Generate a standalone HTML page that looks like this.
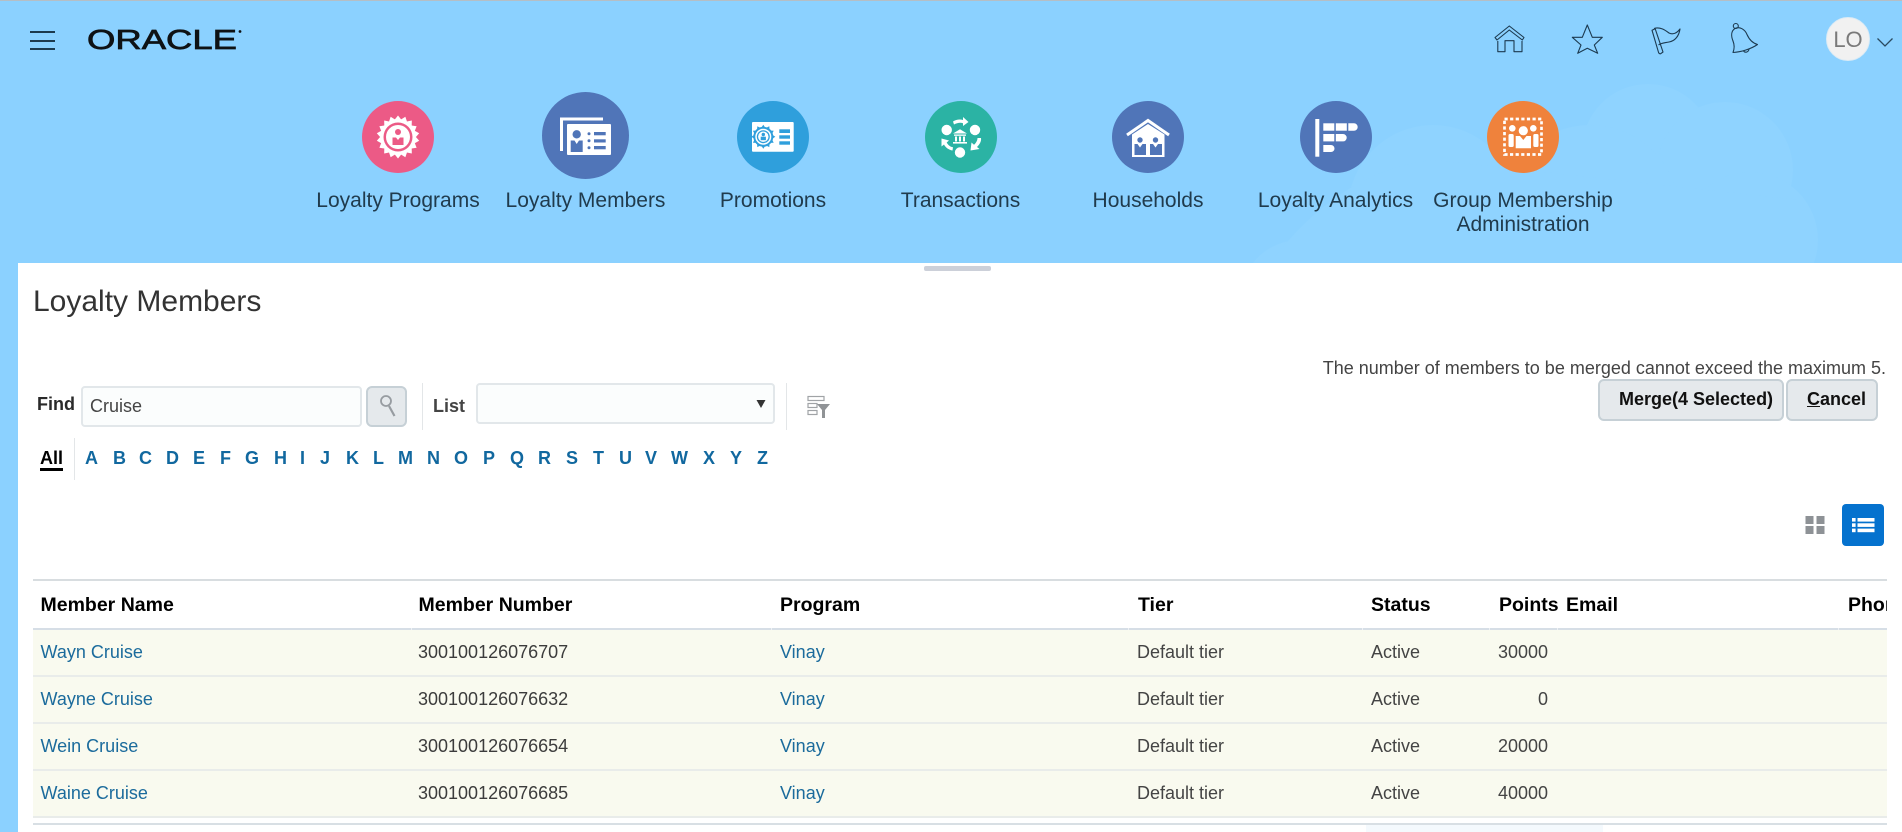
<!DOCTYPE html>
<html lang="en"><head><meta charset="utf-8"><title>Loyalty Members</title>
<style>
html,body{margin:0;padding:0;width:1902px;height:832px;overflow:hidden;background:#8bd1ff}
body{position:relative;font-family:"Liberation Sans",sans-serif;color:#333}
.a{position:absolute}
.t{position:absolute;white-space:nowrap;font-size:18px;line-height:24px}
.l{position:absolute;white-space:nowrap;font-size:21px;line-height:24px;color:#203b4d;text-align:center;width:188px}
.h{font-weight:bold;font-size:19.5px;color:#000}
.lk{color:#1b6b9c}
.z{font-weight:bold;color:#11689f;top:446px}
.r{position:absolute;left:33px;width:1854px;height:45px;background:#f9faef}
.ln{position:absolute;left:33px;width:1854px;height:2px;background:#e9ecea}
.v{position:absolute;width:1px;height:2px;top:628px;background:#eef1f4}
.btn{position:absolute;box-sizing:border-box;background:#e5e9ec;border:2px solid #c6d0d6;border-radius:6px}
</style></head><body>
<div class="a" style="left:0;top:0;width:1902px;height:1px;background:#b5bec5"></div>

<svg class="a" style="left:0;top:0" width="1902" height="263" viewBox="0 0 1902 263">
<g fill="#8fd3ff">
<circle cx="1433" cy="210" r="85"/><circle cx="1648" cy="150" r="66"/><circle cx="1725" cy="170" r="68"/><circle cx="1590" cy="215" r="90"/><circle cx="1750" cy="240" r="68"/><circle cx="1300" cy="300" r="60"/><path d="M1270 263 Q1340 170 1433 160 L1800 200 V263Z"/>
</g>
</svg>

<!-- hamburger + logo -->
<div class="a" style="left:30px;top:31px;width:25px;height:2px;background:#1c3a4e"></div>
<div class="a" style="left:30px;top:39.5px;width:25px;height:2px;background:#1c3a4e"></div>
<div class="a" style="left:30px;top:48px;width:25px;height:2px;background:#1c3a4e"></div>
<svg class="a" style="left:80px;top:20px" width="170" height="40" viewBox="80 20 170 40">
<text x="87" y="49" font-family="Liberation Sans" font-size="27.5" fill="#0e1215" stroke="#0e1215" stroke-width="0.7" textLength="150" lengthAdjust="spacingAndGlyphs">ORACLE</text>
<circle cx="240" cy="31.5" r="1.4" fill="#0e1215"/>
</svg>

<!-- all icons -->
<svg class="a" style="left:0;top:0" width="1902" height="263" viewBox="0 0 1902 263">
<defs><path id="tooth" d="M-3.2-17.5 0-21.5 3.2-17.5Z" fill="#fff"/><path id="gt" d="M-2-9 0-12 2-9Z" fill="#2f9fdc"/></defs>
<!-- header icons -->
<g fill="none" stroke="#1c3a50" stroke-width="1.1" stroke-linejoin="round">
<path d="M1495 37.5 1509.3 26 1524 37.5 1522.3 40 1509.3 30 1497 40Z"/>
<path d="M1497.8 41V51.7H1505V40.7H1514V51.7H1522V41"/>
<path d="M1587.3 25 1592.3 37.3H1602.3L1594.3 45 1597.7 53.3 1587.3 48.3 1577.7 53.3 1581 45 1572.3 37.3H1582.3Z"/>
<path d="M1652 30.2 1655.2 28.8 1663 52 1660.5 53.8C1659.5 54 1659 53.5 1658.6 52.6Z"/>
<path d="M1654 28.5C1660 26.5 1665 30 1669 33C1673 35 1677 33 1680 29C1679 36 1675 41 1669 42C1664 43 1661 43 1658.5 45"/>
<circle cx="1735.8" cy="26" r="2.5"/>
<path d="M1735 28.5C1731 31 1731 36 1733 41C1735 46 1734 50 1733 52.5C1741 52 1751 49 1757.5 44.5C1752 43 1749 39 1747 34.5C1745 29.5 1739.5 26 1735 28.5Z"/>
<path d="M1743.5 51C1745 53 1748 52.5 1749 49.5"/>
</g>
<circle cx="1848" cy="39" r="21.5" fill="#f1f1f1" stroke="#dcebf5" stroke-width="1"/>
<path d="M1877.5 38.5 1885 46 1892.5 38.5" fill="none" stroke="#2a4a60" stroke-width="1.3"/>

<!-- Loyalty Programs -->
<circle cx="398" cy="137" r="36" fill="#ec5a86"/>
<circle cx="398" cy="137" r="18" fill="#fff"/>
<g transform="translate(398 137)"><use href="#tooth"/><use href="#tooth" transform="rotate(20)"/><use href="#tooth" transform="rotate(40)"/><use href="#tooth" transform="rotate(60)"/><use href="#tooth" transform="rotate(80)"/><use href="#tooth" transform="rotate(100)"/><use href="#tooth" transform="rotate(120)"/><use href="#tooth" transform="rotate(140)"/><use href="#tooth" transform="rotate(160)"/><use href="#tooth" transform="rotate(180)"/><use href="#tooth" transform="rotate(200)"/><use href="#tooth" transform="rotate(220)"/><use href="#tooth" transform="rotate(240)"/><use href="#tooth" transform="rotate(260)"/><use href="#tooth" transform="rotate(280)"/><use href="#tooth" transform="rotate(300)"/><use href="#tooth" transform="rotate(320)"/><use href="#tooth" transform="rotate(340)"/></g>
<circle cx="398" cy="137" r="14.5" fill="#ec5a86"/>
<circle cx="398" cy="137" r="12" fill="#fff"/>
<circle cx="398" cy="132" r="3" fill="#ec5a86"/>
<path d="M392.5 137.5H396L398 140 400 137.5H403.5V145H392.5Z" fill="#ec5a86"/>

<!-- Loyalty Members -->
<circle cx="585.5" cy="135.5" r="43.5" fill="#5075b8"/>
<path d="M560 151V117.5H603V120.5H563V151Z" fill="#fff"/>
<rect x="567" y="124" width="44" height="31" rx="1" fill="#fff"/>
<circle cx="576.7" cy="134.3" r="4.2" fill="#5075b8"/>
<path d="M570.7 140.5H574.5L576.7 144 579 140.5H582.7V152H570.7Z" fill="#5075b8"/>
<g fill="#5075b8"><circle cx="589" cy="133.7" r="1.5"/><circle cx="589" cy="140.7" r="1.5"/><circle cx="589" cy="147.7" r="1.5"/><rect x="594" y="132" width="11.7" height="3.3"/><rect x="594" y="139.3" width="11.7" height="3.2"/><rect x="594" y="146" width="11.7" height="3.3"/></g>

<!-- Promotions -->
<circle cx="773" cy="137" r="36" fill="#2f9fdc"/>
<rect x="752" y="122" width="41.7" height="29.7" rx="1" fill="#fff"/>
<g transform="translate(763.3 136.7)"><circle r="10" fill="#2f9fdc"/><use href="#gt"/><use href="#gt" transform="rotate(30)"/><use href="#gt" transform="rotate(60)"/><use href="#gt" transform="rotate(90)"/><use href="#gt" transform="rotate(120)"/><use href="#gt" transform="rotate(150)"/><use href="#gt" transform="rotate(180)"/><use href="#gt" transform="rotate(210)"/><use href="#gt" transform="rotate(240)"/><use href="#gt" transform="rotate(270)"/><use href="#gt" transform="rotate(300)"/><use href="#gt" transform="rotate(330)"/><circle r="8" fill="#fff"/><circle r="6.5" fill="#2f9fdc"/><circle r="5.2" fill="#fff"/><circle cy="-2.2" r="1.7" fill="#2f9fdc"/><path d="M-2.6 0H2.6V3.5H-2.6Z" fill="#2f9fdc"/></g>
<g fill="#2f9fdc"><rect x="779.3" y="129.3" width="10.7" height="3.7"/><rect x="779.3" y="135.3" width="10.7" height="3.4"/><rect x="779.3" y="141.3" width="10.7" height="3.4"/></g>

<!-- Transactions -->
<circle cx="961" cy="137" r="36" fill="#2bb3a4"/>
<g fill="#fff"><circle cx="946.7" cy="130" r="5.2"/><circle cx="975" cy="130" r="5.2"/><circle cx="960" cy="152.5" r="5.2"/>
<path d="M960 129.2 967 133.5H953Z"/><rect x="954" y="134.5" width="12" height="1.3"/><rect x="955" y="136.5" width="2" height="5"/><rect x="959" y="136.5" width="2" height="5"/><rect x="963" y="136.5" width="2" height="5"/><rect x="953" y="142" width="14" height="1.6"/>
<path d="M953 121.5C956 119.5 960 119 963 120L963 117 968.5 122 963 126 963 123.2C960 122.3 957 123 954 124.5Z"/>
<path d="M981 138C981.5 141 980 144 977 147L979.5 149 970.5 150.5 971.5 142.5 974 144.8C976 143 977.5 140.5 977.5 138Z"/>
<path d="M952.5 150.5C949 150 945.5 147.5 944 144.5L941.5 146.5 941.5 138.5 949 140.5 946.7 142.5C948 145 950.2 146.8 953 147.3Z"/></g>

<!-- Households -->
<circle cx="1148" cy="137" r="36" fill="#5075b8"/>
<path d="M1132 134.5 1148 124 1164.5 134.5V157H1132Z" fill="#fff"/>
<path d="M1127 135 1148 120.5 1169 135" fill="none" stroke="#fff" stroke-width="3"/>
<g fill="#5075b8"><circle cx="1140" cy="140" r="2.7"/><circle cx="1155.5" cy="140" r="2.7"/>
<path d="M1134.5 144H1137.5L1140 147.5 1142.5 144H1146V155H1134.5Z"/><path d="M1150 144H1153L1155.5 147.5 1158 144H1162V155H1150Z"/></g>

<!-- Analytics -->
<circle cx="1336" cy="137" r="36" fill="#5075b8"/>
<g fill="#fff"><rect x="1315.3" y="119" width="4" height="37.7"/>
<rect x="1323.3" y="123.3" width="11" height="7.4"/><rect x="1335.8" y="123.3" width="11" height="7.4"/><path d="M1348.3 123.3H1354a3.7 3.7 0 0 1 0 7.4H1348.3Z"/>
<rect x="1323.3" y="134" width="11" height="7.4"/><path d="M1335.8 134H1343a3.7 3.7 0 0 1 0 7.4H1335.8Z"/>
<path d="M1323.3 145H1331a3.5 3.5 0 0 1 0 7H1323.3Z"/></g>

<!-- Group Membership -->
<circle cx="1523" cy="137" r="36" fill="#ef823c"/>
<rect x="1504.5" y="119" width="37" height="35.5" fill="none" stroke="#fff" stroke-width="2.7" stroke-dasharray="3.2 2.4"/>
<g fill="#fff"><circle cx="1523.3" cy="130.7" r="4.6"/><circle cx="1512.3" cy="128.3" r="3.3"/><circle cx="1533.3" cy="128.3" r="3.3"/>
<path d="M1515.7 136H1520L1523.3 140 1526.5 136H1531V148.3H1515.7Z"/>
<rect x="1508.5" y="134" width="5.2" height="13" rx="1.5"/><rect x="1533.3" y="134" width="5.2" height="13" rx="1.5"/></g>
</svg>

<div class="a" style="left:1827px;top:18px;width:42px;height:43px;line-height:44px;text-align:center;font-size:22px;color:#7a7a7a">LO</div>

<div class="l" style="left:304px;top:189px">Loyalty Programs</div>
<div class="l" style="left:491.5px;top:189px">Loyalty Members</div>
<div class="l" style="left:679px;top:189px">Promotions</div>
<div class="l" style="left:866.5px;top:189px">Transactions</div>
<div class="l" style="left:1054px;top:189px">Households</div>
<div class="l" style="left:1241.5px;top:189px">Loyalty Analytics</div>
<div class="l" style="left:1429px;top:189px">Group Membership<br>Administration</div>

<!-- white panel -->
<div class="a" style="left:18px;top:263px;width:1884px;height:569px;background:#fff"></div>
<div class="a" style="left:1366px;top:825px;width:237px;height:7px;background:#f4f9fd"></div>
<div class="a" style="left:924px;top:266px;width:67px;height:5px;border-radius:2px;background:#ccd0d9"></div>

<div class="t" style="left:33px;top:285px;font-size:30px;line-height:34px;color:#333">Loyalty Members</div>

<div class="t" style="left:37px;top:392px;font-weight:bold;color:#2a2a2a">Find</div>
<div class="a" style="left:81px;top:386px;width:281px;height:41px;box-sizing:border-box;background:#fbfdfd;border:2px solid #e2e7ea;border-radius:4px"></div>
<div class="t" style="left:90px;top:394px;color:#444">Cruise</div>
<div class="btn" style="left:366px;top:386px;width:41px;height:41px"></div>
<svg class="a" style="left:366px;top:386px" width="41" height="41" viewBox="0 0 41 41"><circle cx="20" cy="15" r="5" fill="none" stroke="#979ca1" stroke-width="1.8"/><path d="M23 20 28.5 30" stroke="#979ca1" stroke-width="2.2" fill="none"/></svg>
<div class="a" style="left:422px;top:383px;width:1px;height:47px;background:#e3e6e8"></div>
<div class="t" style="left:433px;top:394px;font-weight:bold;color:#444">List</div>
<div class="a" style="left:476px;top:383px;width:299px;height:41px;box-sizing:border-box;background:#fbfdfd;border:2px solid #e2e7ea;border-radius:4px"></div>
<svg class="a" style="left:755px;top:398px" width="12" height="12" viewBox="0 0 12 12"><path d="M1.5 2H10.5L6 10Z" fill="#333"/></svg>
<div class="a" style="left:786px;top:383px;width:1px;height:47px;background:#e3e6e8"></div>
<svg class="a" style="left:805px;top:394px" width="27" height="26" viewBox="0 0 27 26"><g fill="none" stroke="#a0a3a6" stroke-width="1.2"><rect x="3" y="2.5" width="16" height="4"/><rect x="3" y="9.5" width="9" height="4"/><rect x="3" y="16.5" width="9" height="4"/></g><path d="M12 10H25L20 16V24H17V16Z" fill="#909396"/></svg>

<div class="t" style="left:40px;top:446px;color:#000;font-weight:bold">All</div>
<div class="a" style="left:40px;top:468px;width:23px;height:3px;background:#000"></div>
<div class="a" style="left:74px;top:438px;width:1px;height:42px;background:#e3e6e8"></div>
<span class="t z" style="left:85px">A</span><span class="t z" style="left:113px">B</span><span class="t z" style="left:139px">C</span><span class="t z" style="left:166px">D</span><span class="t z" style="left:193px">E</span><span class="t z" style="left:220px">F</span><span class="t z" style="left:245px">G</span><span class="t z" style="left:274px">H</span><span class="t z" style="left:300px">I</span><span class="t z" style="left:320px">J</span><span class="t z" style="left:346px">K</span><span class="t z" style="left:373px">L</span><span class="t z" style="left:398px">M</span><span class="t z" style="left:427px">N</span><span class="t z" style="left:454px">O</span><span class="t z" style="left:483px">P</span><span class="t z" style="left:510px">Q</span><span class="t z" style="left:538px">R</span><span class="t z" style="left:566px">S</span><span class="t z" style="left:593px">T</span><span class="t z" style="left:619px">U</span><span class="t z" style="left:645px">V</span><span class="t z" style="left:671px">W</span><span class="t z" style="left:703px">X</span><span class="t z" style="left:730px">Y</span><span class="t z" style="left:757px">Z</span>

<div class="t" style="right:16px;top:356px;color:#444">The number of members to be merged cannot exceed the maximum 5.</div>
<div class="btn" style="left:1598px;top:379px;width:186px;height:42px"></div>
<div class="btn" style="left:1786px;top:379px;width:92px;height:42px"></div>
<div class="t" style="left:1619px;top:387px;font-weight:bold;color:#111">Merge(4 Selected)</div>
<div class="t" style="left:1807px;top:387px;font-weight:bold;color:#111"><u>C</u>ancel</div>

<svg class="a" style="left:1800px;top:500px" width="90" height="50" viewBox="0 0 90 50"><g fill="#8e9296"><rect x="5.5" y="16" width="8" height="8"/><rect x="16.5" y="16" width="8" height="8"/><rect x="5.5" y="26" width="8" height="8"/><rect x="16.5" y="26" width="8" height="8"/></g><rect x="42" y="4" width="42" height="42" rx="4" fill="#0572ce"/><g fill="#fff"><rect x="52" y="18" width="3.6" height="3.6"/><rect x="52" y="23.3" width="3.6" height="3.6"/><rect x="52" y="28.6" width="3.6" height="3.6"/><rect x="57.5" y="18" width="17" height="3.6"/><rect x="57.5" y="23.3" width="17" height="3.6"/><rect x="57.5" y="28.6" width="17" height="3.6"/></g></svg>

<!-- table -->
<div class="a" style="left:33px;top:579px;width:1854px;height:2px;background:#d8dde0"></div>
<div class="a" style="left:33px;top:628px;width:1854px;height:2px;background:#d6dee6"></div>
<div class="v" style="left:411px"></div><div class="v" style="left:771px"></div><div class="v" style="left:1128px"></div><div class="v" style="left:1362px"></div><div class="v" style="left:1489px"></div><div class="v" style="left:1557px"></div><div class="v" style="left:1838px"></div>
<div class="r" style="top:630px"></div><div class="ln" style="top:675px"></div>
<div class="r" style="top:677px"></div><div class="ln" style="top:722px"></div>
<div class="r" style="top:724px"></div><div class="ln" style="top:769px"></div>
<div class="r" style="top:771px"></div><div class="ln" style="top:816px"></div>
<div class="a" style="left:33px;top:823px;width:1854px;height:2px;background:#d8dfe4"></div>

<div class="t h" style="left:40.5px;top:593px">Member Name</div>
<div class="t h" style="left:418.5px;top:593px">Member Number</div>
<div class="t h" style="left:780px;top:593px">Program</div>
<div class="t h" style="left:1138px;top:593px">Tier</div>
<div class="t h" style="left:1371px;top:593px">Status</div>
<div class="t h" style="left:1499px;top:593px">Points</div>
<div class="t h" style="left:1566px;top:593px">Email</div>
<div class="a" style="left:1848px;top:593px;width:39px;height:24px;overflow:hidden"><span class="t h" style="left:0;top:0">Phone</span></div>

<div class="t lk" style="left:40.5px;top:640px">Wayn Cruise</div>
<div class="t" style="left:418px;top:640px;color:#3c3c3c">300100126076707</div>
<div class="t lk" style="left:780px;top:640px">Vinay</div>
<div class="t" style="left:1137px;top:640px;color:#444">Default tier</div>
<div class="t" style="left:1371px;top:640px;color:#444">Active</div>
<div class="t" style="right:354px;top:640px;color:#444">30000</div>

<div class="t lk" style="left:40.5px;top:687px">Wayne Cruise</div>
<div class="t" style="left:418px;top:687px;color:#3c3c3c">300100126076632</div>
<div class="t lk" style="left:780px;top:687px">Vinay</div>
<div class="t" style="left:1137px;top:687px;color:#444">Default tier</div>
<div class="t" style="left:1371px;top:687px;color:#444">Active</div>
<div class="t" style="right:354px;top:687px;color:#444">0</div>

<div class="t lk" style="left:40.5px;top:734px">Wein Cruise</div>
<div class="t" style="left:418px;top:734px;color:#3c3c3c">300100126076654</div>
<div class="t lk" style="left:780px;top:734px">Vinay</div>
<div class="t" style="left:1137px;top:734px;color:#444">Default tier</div>
<div class="t" style="left:1371px;top:734px;color:#444">Active</div>
<div class="t" style="right:354px;top:734px;color:#444">20000</div>

<div class="t lk" style="left:40.5px;top:781px">Waine Cruise</div>
<div class="t" style="left:418px;top:781px;color:#3c3c3c">300100126076685</div>
<div class="t lk" style="left:780px;top:781px">Vinay</div>
<div class="t" style="left:1137px;top:781px;color:#444">Default tier</div>
<div class="t" style="left:1371px;top:781px;color:#444">Active</div>
<div class="t" style="right:354px;top:781px;color:#444">40000</div>
</body></html>
